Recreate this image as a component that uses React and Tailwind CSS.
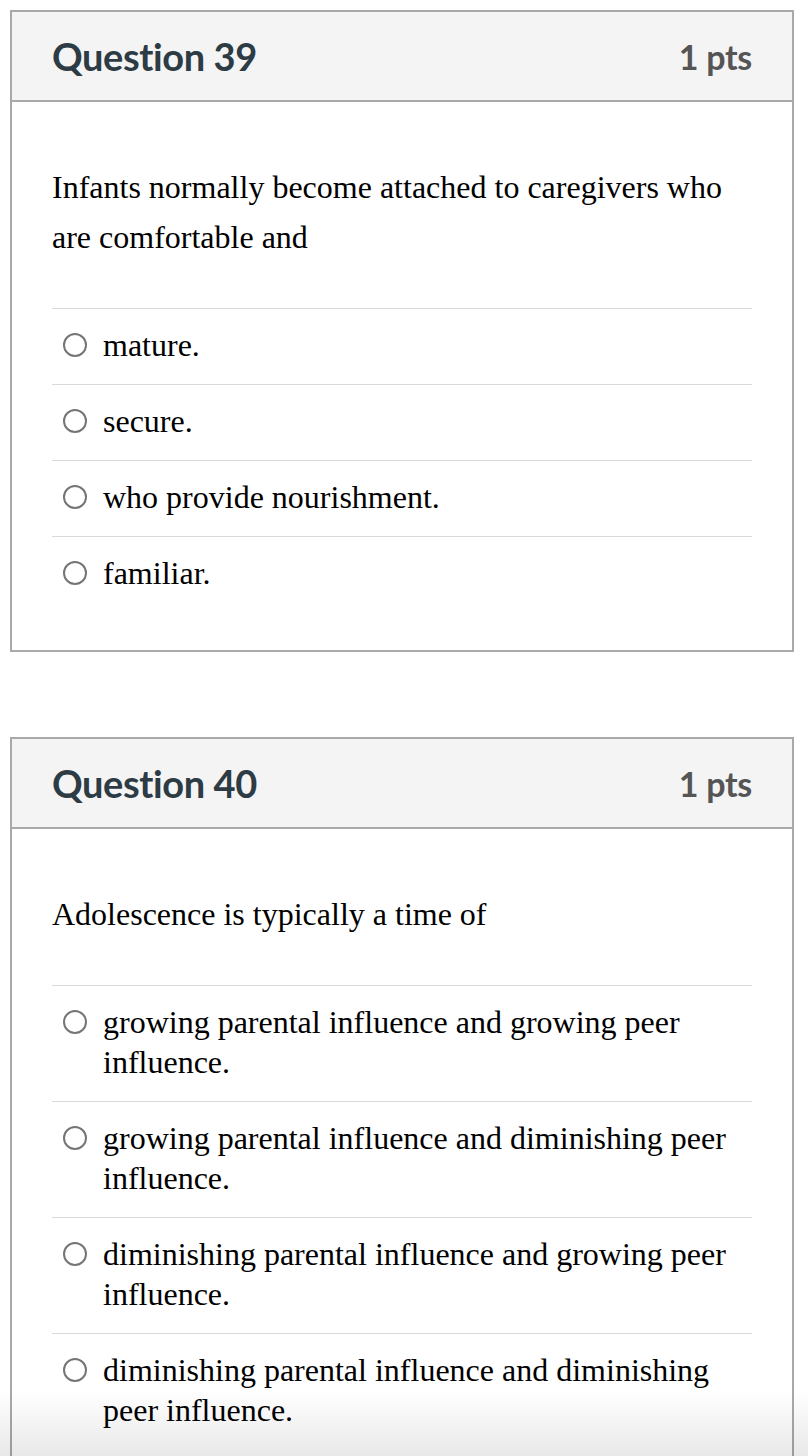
import React from "react";

const questions = [
  {
    num: 39,
    text: "Infants normally become attached to caregivers who are comfortable and",
    answers: ["mature.", "secure.", "who provide nourishment.", "familiar."],
  },
  {
    num: 40,
    text: "Adolescence is typically a time of",
    answers: [
      "growing parental influence and growing peer influence.",
      "growing parental influence and diminishing peer influence.",
      "diminishing parental influence and growing peer influence.",
      "diminishing parental influence and diminishing peer influence.",
    ],
  },
];

function Radio() {
  return (
    <span className="shrink-0 w-[24px] h-[24px] mt-[8px] rounded-full border-2 border-[#757575] bg-white" />
  );
}

function Question({ q }) {
  return (
    <div className="ml-[10px] mr-[14px] border-2 border-[#a9a9a9] bg-white">
      <div className="h-[90px] flex items-center justify-between px-[40px] bg-[#f4f4f4] border-b-2 border-[#a9a9a9] font-['Lato',sans-serif] font-bold">
        <h2 className="text-[38px] text-[#2d3b45] tracking-[-0.4px]">Question {q.num}</h2>
        <span className="text-[34px] text-[#555] tracking-[-0.3px]">1 pts</span>
      </div>
      <div className="px-[40px] pt-[60px] pb-[38px] font-['Liberation_Serif','Times_New_Roman',serif] text-black">
        <p className="text-[32px] leading-[50px]">{q.text}</p>
        <div className="mt-[46px]">
          {q.answers.map((a) => (
            <div key={a} className="flex gap-[16px] pl-[11px] pt-[16px] pb-[19px] border-t border-[#dadada]">
              <Radio />
              <span className="text-[32px] leading-[40px]">{a}</span>
            </div>
          ))}
        </div>
      </div>
    </div>
  );
}

export default function App() {
  return (
    <div className="relative w-[808px] min-h-[1456px] bg-white pt-[10px] overflow-hidden">
      <div className="flex flex-col gap-[85px]">
        {questions.map((q) => (
          <Question key={q.num} q={q} />
        ))}
      </div>
      <div className="pointer-events-none absolute left-0 right-0 top-[1390px] h-[66px] bg-gradient-to-b from-transparent to-[rgba(0,0,0,0.09)]" />
    </div>
  );
}
